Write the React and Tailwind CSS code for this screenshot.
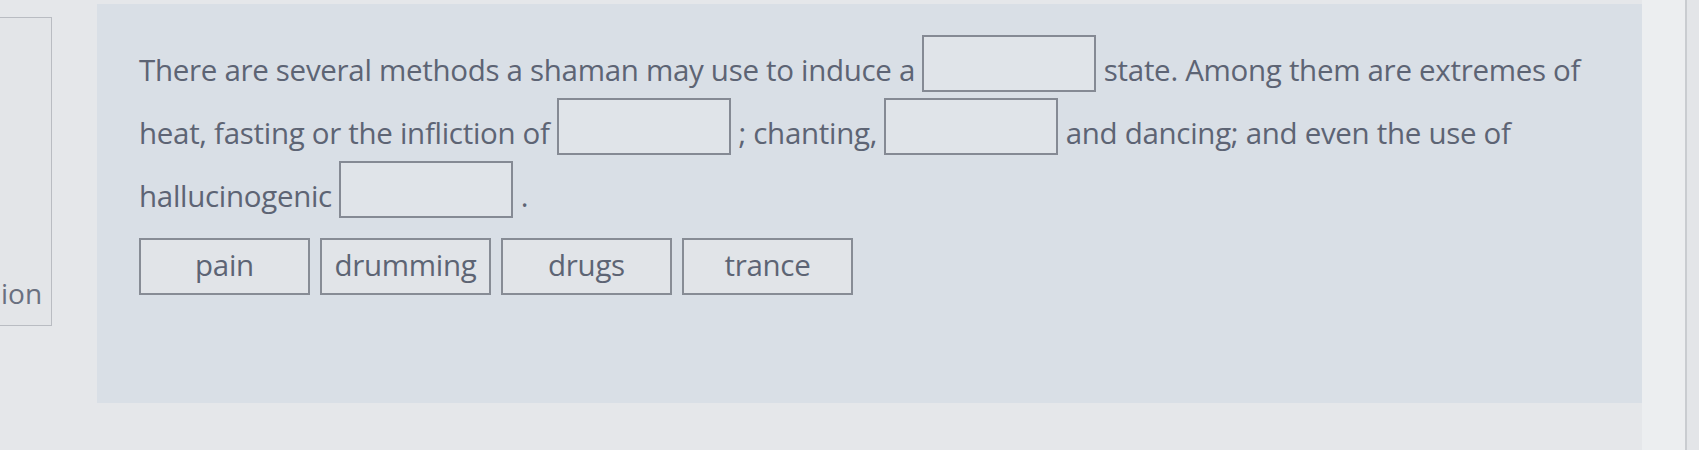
import React from "react";

function Blank() {
  return (
    <span className="inline-block w-[174px] h-[57px] border-2 border-[#858a94] bg-[#e0e4e9] align-[-11px]" />
  );
}

function Tile({ children }) {
  return (
    <div className="w-[171px] h-[57px] flex items-center justify-center border-2 border-[#878c95] bg-[#e1e4e8] text-[29.5px] tracking-[-0.3px] text-[#5d6474] leading-none pb-[4px]">
      {children}
    </div>
  );
}

export default function App() {
  return (
    <div
      className="w-[1699px] h-[450px] overflow-hidden bg-[#e5e7ea] flex items-start"
      style={{ fontFamily: '"Open Sans", sans-serif' }}
    >
      <div className="shrink-0 w-[52px] mt-[17px] h-[309px] border border-l-0 border-[#b9bcc2] bg-[#e3e5e8] flex items-end justify-start pl-[1px] pb-[18px]">
        <span className="text-[28px] leading-none text-[#6a7080]">ion</span>
      </div>
      <div className="shrink-0 ml-[45px] mt-[4px] w-[1545px] h-[399px] bg-[#d9dfe6] pl-[42px] pr-[12px] pt-[31px]">
        <p className="text-[29.5px] tracking-[-0.3px] leading-[56px] text-[#5d6474]">
          <span>There are several methods a shaman may use to induce a</span> <Blank />{" "}
          <span>state. Among them are extremes of</span> <span>heat, fasting or the infliction of</span> <Blank />{" "}
          <span>; chanting,</span> <Blank /> <span>and dancing; and even the use of</span>{" "}
          <span>hallucinogenic</span> <Blank /> <span>.</span>
        </p>
        <div className="mt-[14px] flex gap-[10px]">
          <Tile>pain</Tile>
          <Tile>drumming</Tile>
          <Tile>drugs</Tile>
          <Tile>trance</Tile>
        </div>
      </div>
      <div className="shrink-0 w-[45px] h-full bg-[#eceef0] border-r-2 border-[#c9ccd0]" />
      <div className="shrink-0 flex-1 h-full bg-[#e3e5e8]" />
    </div>
  );
}
